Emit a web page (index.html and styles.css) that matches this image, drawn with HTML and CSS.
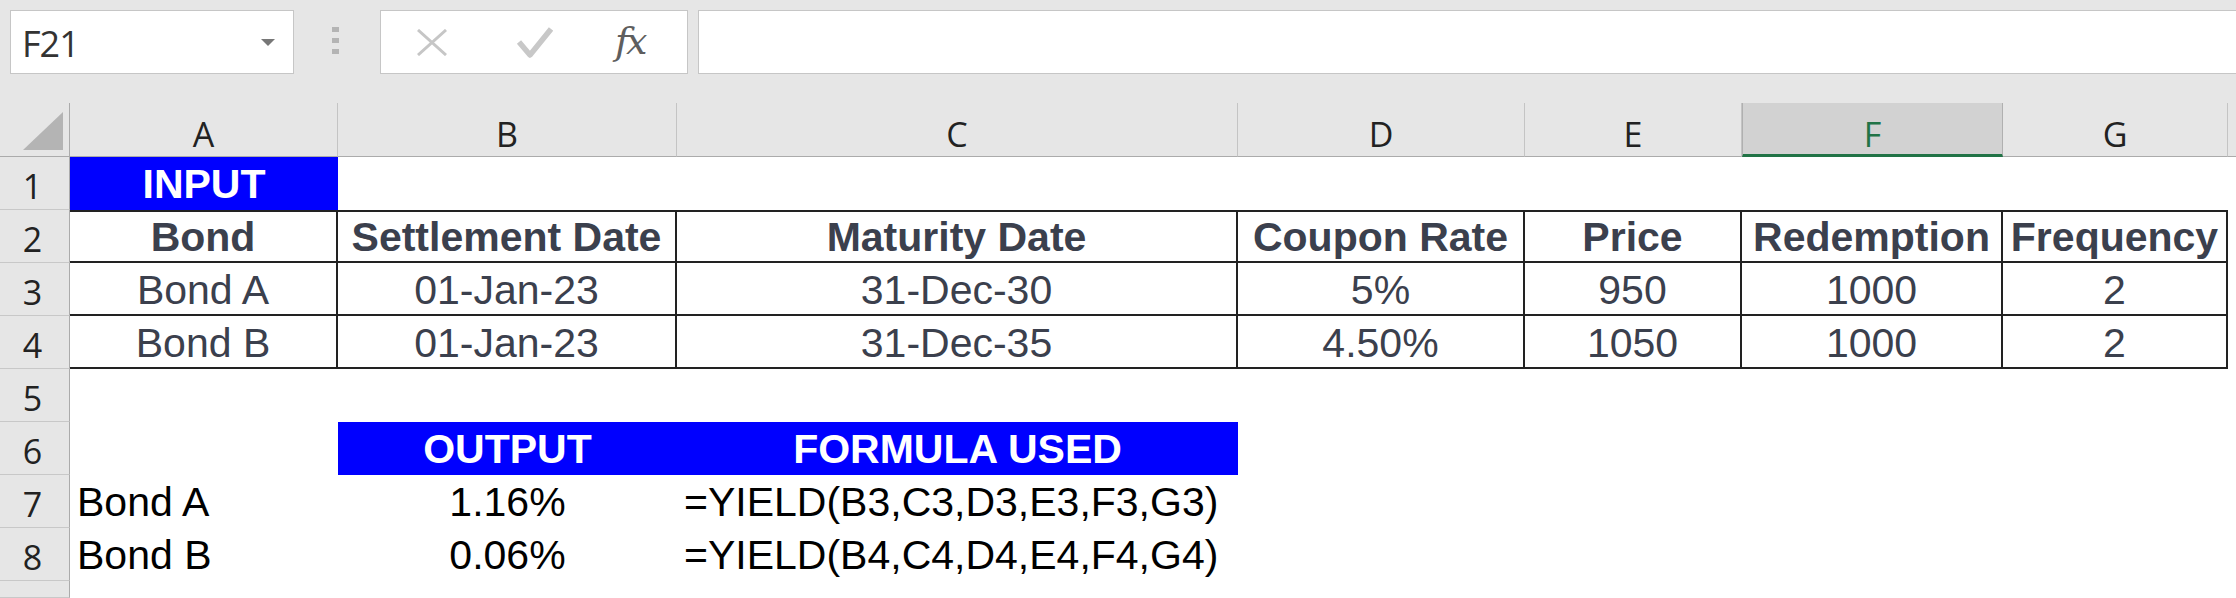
FILE: index.html
```html
<!DOCTYPE html>
<html>
<head>
<meta charset="utf-8">
<link rel="stylesheet" href="styles.css">
</head>
<body>
<div class="toolbar">
  <div class="namebox"><span class="nb-text">F21</span><span class="nb-arrow"></span></div>
  <div class="grip"><i></i><i></i><i></i></div>
  <div class="fbtns">
    <svg class="ic-x" width="32" height="27" viewBox="0 0 32 27"><path d="M2 1 L30 26 M30 1 L2 26" stroke="#c6c6c6" stroke-width="3" fill="none"/></svg>
    <svg class="ic-ok" width="37" height="32" viewBox="0 0 37 32"><path d="M3 16 L14 29 L35 3" stroke="#c8c8c8" stroke-width="5.5" fill="none" stroke-linejoin="round"/></svg>
    <span class="fx">fx</span>
  </div>
  <div class="fbar"></div>
</div>
<div class="sheet">
  <div class="corner"><span class="tri"></span></div>
  <div class="ch">A</div><div class="ch">B</div><div class="ch">C</div><div class="ch">D</div><div class="ch">E</div><div class="ch sel">F</div><div class="ch">G</div><div class="ch last"></div>

  <div class="rh">1</div>
  <div class="c blue ctr">INPUT</div><div class="c"></div><div class="c"></div><div class="c"></div><div class="c"></div><div class="c"></div><div class="c"></div><div class="c"></div>

  <div class="rh">2</div>
  <div class="c b top hd ctr">Bond</div><div class="c b top hd ctr">Settlement Date</div><div class="c b top hd ctr">Maturity Date</div><div class="c b top hd ctr">Coupon Rate</div><div class="c b top hd ctr">Price</div><div class="c b top hd ctr">Redemption</div><div class="c b top hd ctr">Frequency</div><div class="c"></div>

  <div class="rh">3</div>
  <div class="c b ctr">Bond A</div><div class="c b ctr">01-Jan-23</div><div class="c b ctr">31-Dec-30</div><div class="c b ctr">5%</div><div class="c b ctr">950</div><div class="c b ctr">1000</div><div class="c b ctr">2</div><div class="c"></div>

  <div class="rh">4</div>
  <div class="c b ctr">Bond B</div><div class="c b ctr">01-Jan-23</div><div class="c b ctr">31-Dec-35</div><div class="c b ctr">4.50%</div><div class="c b ctr">1050</div><div class="c b ctr">1000</div><div class="c b ctr">2</div><div class="c"></div>

  <div class="rh">5</div>
  <div class="c"></div><div class="c"></div><div class="c"></div><div class="c"></div><div class="c"></div><div class="c"></div><div class="c"></div><div class="c"></div>

  <div class="rh">6</div>
  <div class="c"></div><div class="c blue ctr">OUTPUT</div><div class="c blue ctr">FORMULA USED</div><div class="c"></div><div class="c"></div><div class="c"></div><div class="c"></div><div class="c"></div>

  <div class="rh">7</div>
  <div class="c k">Bond A</div><div class="c k ctr">1.16%</div><div class="c k">=YIELD(B3,C3,D3,E3,F3,G3)</div><div class="c"></div><div class="c"></div><div class="c"></div><div class="c"></div><div class="c"></div>

  <div class="rh">8</div>
  <div class="c k">Bond B</div><div class="c k ctr">0.06%</div><div class="c k">=YIELD(B4,C4,D4,E4,F4,G4)</div><div class="c"></div><div class="c"></div><div class="c"></div><div class="c"></div><div class="c"></div>

  <div class="rh"></div>
  <div class="c"></div><div class="c"></div><div class="c"></div><div class="c"></div><div class="c"></div><div class="c"></div><div class="c"></div><div class="c"></div>
</div>
</body>
</html>
```

FILE: styles.css
```css
html, body {
  margin: 0;
  padding: 0;
  width: 2236px;
  height: 598px;
  overflow: hidden;
  background: #ffffff;
}
* { box-sizing: border-box; }

.toolbar {
  height: 103px;
  background: #e6e6e6;
  display: flex;
  align-items: flex-start;
  padding-top: 10px;
}
.namebox {
  margin-left: 10px;
  width: 284px;
  height: 64px;
  background: #fff;
  border: 1px solid #c6c6c6;
  display: flex;
  align-items: center;
  justify-content: space-between;
  padding: 0 18px 0 11px;
}
.nb-text {
  font-family: "Open Sans", sans-serif;
  font-size: 36px;
  color: #333;
  line-height: 1;
  position: relative;
  top: 2px;
  letter-spacing: -1px;
}
.nb-arrow {
  width: 0;
  height: 0;
  border-left: 7px solid transparent;
  border-right: 7px solid transparent;
  border-top: 7px solid #777;
}
.grip {
  margin-left: 38px;
  margin-top: 17px;
  display: flex;
  flex-direction: column;
  gap: 6px;
}
.grip i {
  display: block;
  width: 7px;
  height: 5px;
  background: #b4b4b4;
}
.fbtns {
  margin-left: 41px;
  width: 308px;
  height: 64px;
  background: #fff;
  border: 1px solid #c6c6c6;
  display: flex;
  align-items: center;
  padding-left: 35px;
}
.ic-x { display: block; }
.ic-ok { display: block; margin-left: 68px; }
.fx {
  margin-left: 62px;
  font-family: "DejaVu Serif", "Liberation Serif", serif;
  font-style: italic;
  font-size: 38px;
  color: #5e5e5e;
  line-height: 1;
  letter-spacing: -3px;
  position: relative;
  top: -1px;
}
.fbar {
  margin-left: 10px;
  flex: 1;
  height: 64px;
  background: #fff;
  border: 1px solid #c6c6c6;
  border-right: none;
}

.sheet {
  display: grid;
  grid-template-columns: 70px 268px 339px 561px 287px 217px 261px 225px 1fr;
  grid-template-rows: 54px repeat(8, 53px) 1fr;
  height: 495px;
}
.corner {
  background: #e6e6e6;
  border-right: 1px solid #ababab;
  border-bottom: 1px solid #ababab;
  display: flex;
  align-items: flex-end;
  justify-content: flex-end;
  padding: 0 6px 6px 0;
}
.tri {
  display: block;
  width: 40px;
  height: 38px;
  background: #b4b4b4;
  clip-path: polygon(100% 0, 100% 100%, 0 100%);
}
.ch {
  background: #e6e6e6;
  border-right: 1px solid #c4c4c4;
  border-bottom: 1px solid #ababab;
  display: flex;
  align-items: flex-end;
  justify-content: center;
  font-family: "Open Sans", sans-serif;
  font-size: 34px;
  line-height: 34px;
  color: #222;
  padding-bottom: 5px;
}
.ch.sel {
  background: #d2d2d2;
  color: #217346;
  border-right: 1px solid #b0b0b0;
  border-left: 1px solid #b0b0b0;
  border-bottom: 3px solid #217346;
  padding-bottom: 3px;
}
.ch.last { border-right: none; }
.rh {
  background: #e6e6e6;
  border-right: 1px solid #ababab;
  border-bottom: 1px solid #c8c8c8;
  display: flex;
  align-items: flex-end;
  justify-content: center;
  font-family: "Open Sans", sans-serif;
  font-size: 34px;
  line-height: 34px;
  color: #222;
  padding-bottom: 6px;
  padding-right: 4px;
}
.c {
  display: flex;
  align-items: flex-end;
  font-family: "Liberation Sans", Arial, sans-serif;
  font-size: 41px;
  line-height: 41px;
  color: #3b404d;
  white-space: nowrap;
  padding: 0 7px 5px 7px;
  overflow: hidden;
}
.c.ctr { justify-content: center; }
.c.b {
  border-right: 2px solid #222;
  border-bottom: 2px solid #222;
  padding-bottom: 3px;
}
.c.top { border-top: 2px solid #222; }
.c.hd { font-weight: bold; }
.c.blue {
  background: #0000ff;
  color: #ffffff;
  font-weight: bold;
}
.c.k { color: #000; }
```
